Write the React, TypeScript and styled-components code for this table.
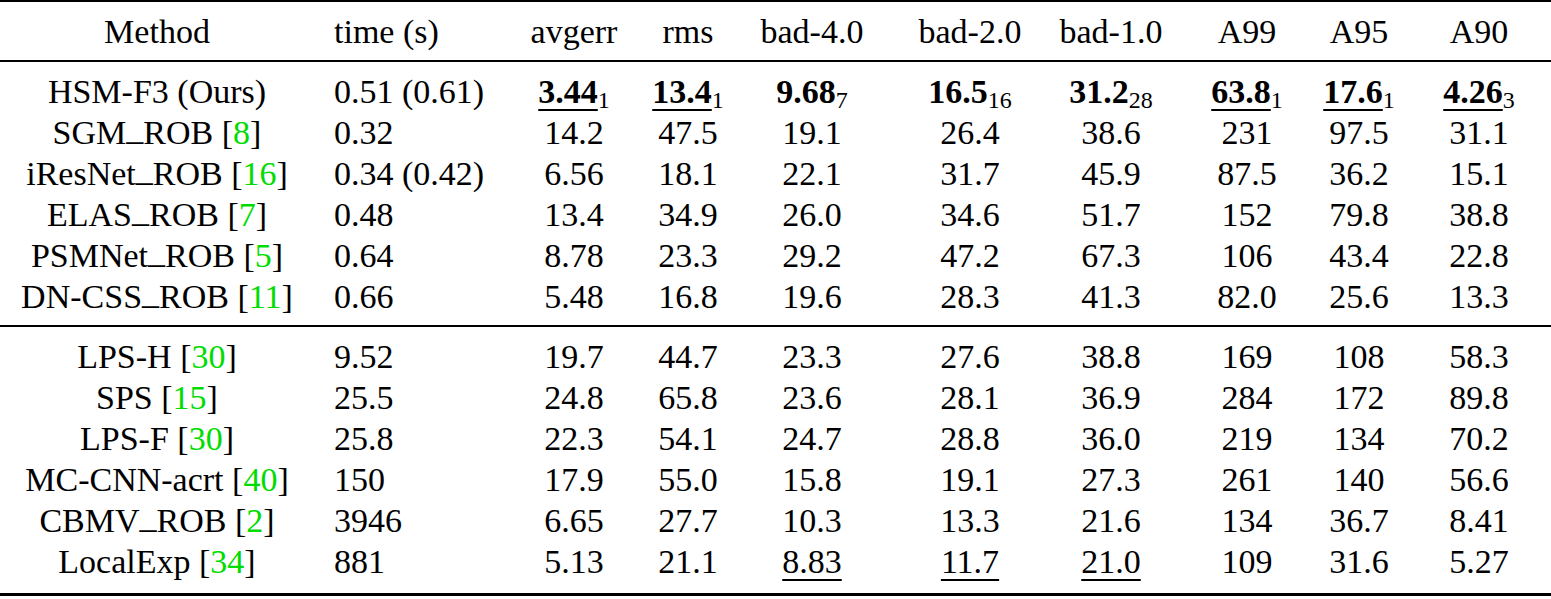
import React from "react";
import styled, { createGlobalStyle } from "styled-components";

const SERIF = `"Liberation Serif", "Times New Roman", Times, "DejaVu Serif", serif`;

const GlobalStyle = createGlobalStyle`
  html, body {
    margin: 0;
    padding: 0;
    background: #fff;
    overflow: hidden;
  }
  body {
    font-family: ${SERIF};
    color: #000;
  }
`;

const COLS = "314px 194px 132px 96px 152px 164px 118px 154px 70px 170px";

const Table = styled.div`
  width: 1551px;
  font-family: ${SERIF};
  border-top: 2px solid #000;
  border-bottom: 3px solid #000;
  overflow: hidden;
`;

const Section = styled.div<{ $rule?: boolean; $bottom?: number }>`
  display: flex;
  flex-direction: column;
  padding: 9px 0 ${(p) => p.$bottom ?? 8}px;
  border-bottom: ${(p) => (p.$rule ? "2px solid #000" : "none")};
`;

const Row = styled.div`
  display: grid;
  grid-template-columns: ${COLS};
  height: 41px;
`;

const Cell = styled.div<{ $left?: boolean }>`
  display: flex;
  justify-content: ${(p) => (p.$left ? "flex-start" : "center")};
  padding-left: ${(p) => (p.$left ? "20px" : "0")};
  font-family: ${SERIF};
  font-size: 34px;
  line-height: 41px;
  white-space: nowrap;
`;

const Content = styled.span``;

const Num = styled.span<{ $bold?: boolean; $under?: boolean }>`
  font-weight: ${(p) => (p.$bold ? 700 : 400)};
  text-decoration: ${(p) => (p.$under ? "underline" : "none")};
  text-decoration-thickness: 1.5px;
  text-underline-offset: 6px;
`;

const Sub = styled.span`
  font-size: 24px;
  line-height: 0;
  vertical-align: -5px;
`;

const Cite = styled.span`
  color: #00dc00;
`;

const Low = styled.span`
  position: relative;
  top: -4px;
`;

type Val = string | { v: string; b?: boolean; u?: boolean; s?: string };

type Entry = {
  name: string;
  cite?: string;
  time: string;
  vals: Val[];
};

const B = (v: string, s: string, u = true): Val => ({ v, b: true, u, s });
const U = (v: string): Val => ({ v, u: true });

const groupA: Entry[] = [
  {
    name: "HSM-F3 (Ours)",
    time: "0.51 (0.61)",
    vals: [B("3.44", "1"), B("13.4", "1"), B("9.68", "7", false), B("16.5", "16", false), B("31.2", "28", false), B("63.8", "1"), B("17.6", "1"), B("4.26", "3")],
  },
  { name: "SGM_ROB", cite: "8", time: "0.32", vals: ["14.2", "47.5", "19.1", "26.4", "38.6", "231", "97.5", "31.1"] },
  { name: "iResNet_ROB", cite: "16", time: "0.34 (0.42)", vals: ["6.56", "18.1", "22.1", "31.7", "45.9", "87.5", "36.2", "15.1"] },
  { name: "ELAS_ROB", cite: "7", time: "0.48", vals: ["13.4", "34.9", "26.0", "34.6", "51.7", "152", "79.8", "38.8"] },
  { name: "PSMNet_ROB", cite: "5", time: "0.64", vals: ["8.78", "23.3", "29.2", "47.2", "67.3", "106", "43.4", "22.8"] },
  { name: "DN-CSS_ROB", cite: "11", time: "0.66", vals: ["5.48", "16.8", "19.6", "28.3", "41.3", "82.0", "25.6", "13.3"] },
];

const groupB: Entry[] = [
  { name: "LPS-H", cite: "30", time: "9.52", vals: ["19.7", "44.7", "23.3", "27.6", "38.8", "169", "108", "58.3"] },
  { name: "SPS", cite: "15", time: "25.5", vals: ["24.8", "65.8", "23.6", "28.1", "36.9", "284", "172", "89.8"] },
  { name: "LPS-F", cite: "30", time: "25.8", vals: ["22.3", "54.1", "24.7", "28.8", "36.0", "219", "134", "70.2"] },
  { name: "MC-CNN-acrt", cite: "40", time: "150", vals: ["17.9", "55.0", "15.8", "19.1", "27.3", "261", "140", "56.6"] },
  { name: "CBMV_ROB", cite: "2", time: "3946", vals: ["6.65", "27.7", "10.3", "13.3", "21.6", "134", "36.7", "8.41"] },
  { name: "LocalExp", cite: "34", time: "881", vals: ["5.13", "21.1", U("8.83"), U("11.7"), U("21.0"), "109", "31.6", "5.27"] },
];

const headers = ["avgerr", "rms", "bad-4.0", "bad-2.0", "bad-1.0", "A99", "A95", "A90"];

const MethodName: React.FC<{ name: string }> = ({ name }) => {
  const parts = name.split("_");
  return (
    <>
      {parts.map((p, i) => (
        <React.Fragment key={i}>
          {i > 0 && <Low>_</Low>}
          {p}
        </React.Fragment>
      ))}
    </>
  );
};

const Value: React.FC<{ val: Val }> = ({ val }) => {
  if (typeof val === "string") return <>{val}</>;
  return (
    <>
      <Num $bold={val.b} $under={val.u}>{val.v}</Num>
      {val.s && <Sub>{val.s}</Sub>}
    </>
  );
};

const BodyRow: React.FC<{ e: Entry }> = ({ e }) => (
  <Row>
    <Cell>
      <Content>
        <MethodName name={e.name} />
        {e.cite && (
          <>
            {" ["}
            <Cite>{e.cite}</Cite>]
          </>
        )}
      </Content>
    </Cell>
    <Cell $left>
      <Content>{e.time}</Content>
    </Cell>
    {e.vals.map((v, i) => (
      <Cell key={i}>
        <Content>
          <Value val={v} />
        </Content>
      </Cell>
    ))}
  </Row>
);

export default function App() {
  return (
    <>
      <GlobalStyle />
      <Table>
        <Section $rule>
          <Row>
            <Cell>
              <Content>Method</Content>
            </Cell>
            <Cell $left>
              <Content>time (s)</Content>
            </Cell>
            {headers.map((h) => (
              <Cell key={h}>
                <Content>{h}</Content>
              </Cell>
            ))}
          </Row>
        </Section>
        <Section $rule>
          {groupA.map((e) => (
            <BodyRow key={e.name} e={e} />
          ))}
        </Section>
        <Section $bottom={11}>
          {groupB.map((e) => (
            <BodyRow key={e.name} e={e} />
          ))}
        </Section>
      </Table>
    </>
  );
}
